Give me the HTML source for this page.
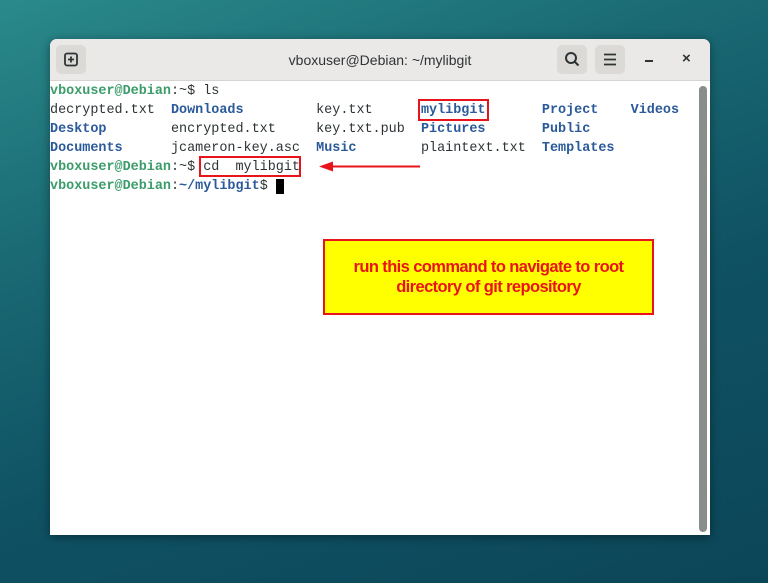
<!DOCTYPE html>
<html><head><style>
*{margin:0;padding:0;box-sizing:border-box}
body{width:768px;height:583px;overflow:hidden;position:relative;
background:linear-gradient(160deg,#2a8a8a 0%,#1a6a74 30%,#0f5264 60%,#0b4658 100%);font-family:"Liberation Sans",sans-serif}
.win{position:absolute;left:50px;top:39px;width:660px;height:496px;background:#fff;border-radius:7px 7px 0 0;overflow:hidden;box-shadow:0 2px 10px rgba(0,0,0,.4)}
.tb{height:42px;background:#ebe9e7;border-bottom:1px solid #d6d4d1;position:relative}
.btn{position:absolute;top:6px;width:30px;height:29px;background:#dcdad7;border-radius:5px}
.title{position:absolute;left:0;right:0;top:13px;text-align:center;font-size:14px;color:#2e3436}
pre{position:absolute;left:0;top:43px;font-family:"Liberation Mono",monospace;font-size:13.45px;line-height:19px;color:#2e3436}
.g{font-weight:bold;color:#3b9c6a}
.b{color:#2a5a9a;font-weight:bold}
.sb{position:absolute;left:649px;top:47px;width:8px;height:446px;background:#8a8d8d;border-radius:4px}
.note{position:absolute;left:323px;top:239px;width:331px;height:76px;background:#ffff00;border:2px solid #e8141b;color:#e8141b;font-weight:bold;font-size:16.5px;letter-spacing:-0.6px;text-align:center;line-height:20px;padding-top:16px}
.rb{position:absolute;border:2px solid #e8141b}
</style></head><body>
<div class="win">
<div class="tb">
<div class="btn" style="left:6px"><svg width="30" height="29"><rect x="9" y="8.5" width="12" height="12" rx="2" fill="none" stroke="#2e3436" stroke-width="1.8"/><path d="M15 11.5v6M12 14.5h6" stroke="#2e3436" stroke-width="1.8"/></svg></div>
<div class="title">vboxuser@Debian: ~/mylibgit</div>
<div class="btn" style="left:507px"><svg width="30" height="29"><circle cx="14" cy="13" r="5" fill="none" stroke="#2e3436" stroke-width="2"/><path d="M17.5 16.5l4 4" stroke="#2e3436" stroke-width="2"/></svg></div>
<div class="btn" style="left:545px"><svg width="30" height="29"><path d="M9 9.5h12M9 14.5h12M9 19.5h12" stroke="#2e3436" stroke-width="1.8"/></svg></div>
<div style="position:absolute;left:595px;top:21px;width:8px;height:2px;background:#2e3436"></div>
<div style="position:absolute;left:632px;top:11px;font-size:15px;font-weight:bold;color:#2e3436">×</div>
</div>
<pre><span class="g">vboxuser@Debian</span>:~$ ls
decrypted.txt  <span class="b">Downloads</span>         key.txt      <span class="b">mylibgit</span>       <span class="b">Project</span>    <span class="b">Videos</span>
<span class="b">Desktop</span>        encrypted.txt     key.txt.pub  <span class="b">Pictures</span>       <span class="b">Public</span>
<span class="b">Documents</span>      jcameron-key.asc  <span class="b">Music</span>        plaintext.txt  <span class="b">Templates</span>
<span class="g">vboxuser@Debian</span>:~$ cd  mylibgit
<span class="g">vboxuser@Debian</span>:<span class="b">~/mylibgit</span>$ <span style="background:#000">&nbsp;</span></pre>
<div class="sb"></div>
</div>
<div class="rb" style="left:418px;top:99px;width:71px;height:22px"></div>
<div class="rb" style="left:199px;top:156px;width:102px;height:21px"></div>
<svg style="position:absolute;left:315px;top:160px" width="110" height="14"><path d="M105 6.5H16" stroke="#e8141b" stroke-width="2"/><path d="M4 6.5l14-5v10z" fill="#e8141b"/></svg>
<div class="note">run this command to navigate to root<br>directory of git repository</div>
</body></html>
